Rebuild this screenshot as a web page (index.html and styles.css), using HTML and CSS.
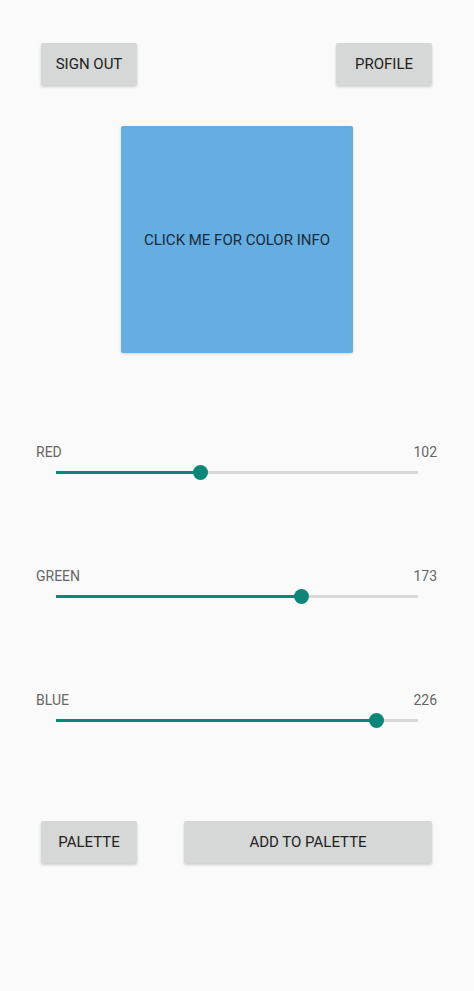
FILE: index.html
```html
<!DOCTYPE html>
<html lang="en">
<head>
  <meta charset="UTF-8">
  <meta name="viewport" content="width=device-width, initial-scale=1.0">
  <title>Color Picker</title>
  <link rel="stylesheet" href="styles.css">
</head>
<body>
  <header class="top-bar">
    <button class="btn">SIGN OUT</button>
    <button class="btn">PROFILE</button>
  </header>

  <div class="swatch" id="swatch">CLICK ME FOR COLOR INFO</div>

  <section class="sliders">
    <div class="slider" data-channel="red">
      <div class="slider-head"><span>RED</span><span class="value">102</span></div>
      <div class="track"><div class="fill" style="width: 40%"></div><div class="thumb" style="left: 40%"></div></div>
    </div>
    <div class="slider" data-channel="green">
      <div class="slider-head"><span>GREEN</span><span class="value">173</span></div>
      <div class="track"><div class="fill" style="width: 67.8%"></div><div class="thumb" style="left: 67.8%"></div></div>
    </div>
    <div class="slider" data-channel="blue">
      <div class="slider-head"><span>BLUE</span><span class="value">226</span></div>
      <div class="track"><div class="fill" style="width: 88.6%"></div><div class="thumb" style="left: 88.6%"></div></div>
    </div>
  </section>

  <footer class="bottom-bar">
    <button class="btn">PALETTE</button>
    <button class="btn btn-wide">ADD TO PALETTE</button>
  </footer>
</body>
</html>
```

FILE: styles.css
```css
:root {
  --bg-color: #fafafa;
  --btn-color: #d6d7d7;
  --accent: #0b8677;
  --track-off: #d9d9d9;
}
* { box-sizing: border-box; margin: 0; padding: 0; }
body {
  font-family: Roboto, "Noto Sans", sans-serif;
  background-color: var(--bg-color);
  color: #222;
  width: 474px;
  min-height: 991px;
}
.btn {
  font-family: inherit;
  background-color: var(--btn-color);
  border: none;
  border-radius: 2px;
  width: 96px;
  height: 42px;
  font-size: 15px;
  color: #222;
  box-shadow: 0 2px 3px rgba(0, 0, 0, 0.18);
  cursor: pointer;
}
.btn-wide { width: 248px; }
.top-bar {
  display: flex;
  justify-content: space-between;
  padding: 43px 42px 0 41px;
}
.swatch {
  width: 232px;
  height: 227px;
  margin: 41px 0 0 121px;
  background-color: rgb(102, 173, 226);
  border-radius: 2px;
  box-shadow: 0 1px 3px rgba(0, 0, 0, 0.15);
  display: flex;
  align-items: center;
  justify-content: center;
  font-size: 15px;
  color: #1b2b3a;
  cursor: pointer;
}
.sliders {
  display: flex;
  flex-direction: column;
  gap: 93px;
  margin-top: 90px;
}
.slider-head {
  display: flex;
  justify-content: space-between;
  padding: 0 37px 0 36px;
  font-size: 14px;
  color: #666;
  line-height: 18px;
}
.track {
  position: relative;
  height: 3px;
  margin: 10px 56px 0 56px;
  background-color: var(--track-off);
}
.fill {
  height: 100%;
  background-color: var(--accent);
}
.thumb {
  position: absolute;
  top: 50%;
  width: 15px;
  height: 15px;
  margin: -7.5px 0 0 -7.5px;
  border-radius: 50%;
  background-color: var(--accent);
}
.bottom-bar {
  display: flex;
  gap: 47px;
  padding: 99px 0 0 41px;
}
```
